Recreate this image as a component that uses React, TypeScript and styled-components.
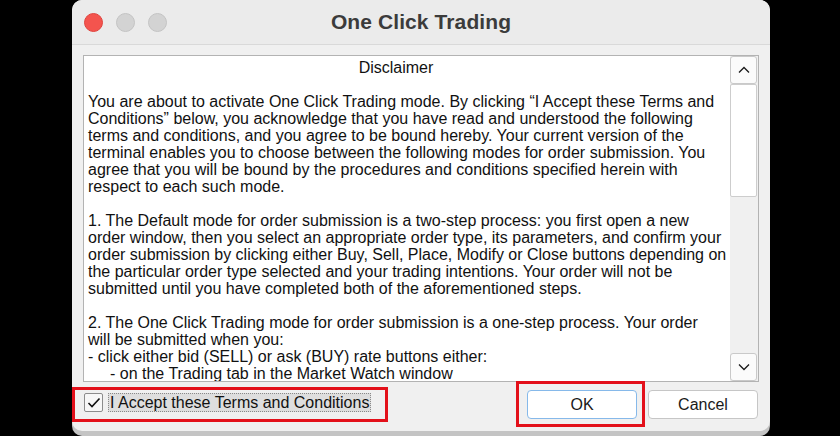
import React from "react";
import styled, { createGlobalStyle } from "styled-components";

const Global = createGlobalStyle`
  html, body { margin: 0; padding: 0; background: #000; }
  body { width: 840px; height: 436px; overflow: hidden; font-family: "Liberation Sans", Arial, sans-serif; }
`;

const Stage = styled.div`
  width: 840px;
  height: 436px;
  display: flex;
  padding-left: 72px;
  box-sizing: border-box;
`;

const Window = styled.div`
  position: relative;
  width: 698px;
  height: 431px;
  background: #f0f0f0;
  border-radius: 10px;
  box-shadow: 0 5px 0 #c4c4c4;
  display: flex;
  flex-direction: column;
`;

const TitleBar = styled.div`
  height: 45px;
  flex: none;
  box-sizing: border-box;
  border-bottom: 1px solid #d9d9d9;
  background: #ebebeb;
  border-radius: 10px 10px 0 0;
  display: grid;
  grid-template-columns: 1fr auto 1fr;
  align-items: center;
  padding: 0 12px;
`;

const Lights = styled.div`
  display: flex;
  gap: 13px;
  align-items: center;
`;

const Light = styled.span<{ $color: string; $edge: string }>`
  width: 19px;
  height: 19px;
  border-radius: 50%;
  box-sizing: border-box;
  background: ${(p) => p.$color};
  border: 1px solid ${(p) => p.$edge};
`;

const Title = styled.div`
  font-family: "Liberation Sans", Arial, sans-serif;
  font-weight: bold;
  font-size: 21px;
  color: #3b3b3b;
  letter-spacing: 0.1px;
`;

const Body = styled.div`
  padding: 10px 11px 0 11px;
  display: flex;
  flex-direction: column;
`;

const TextBox = styled.div`
  height: 327px;
  box-sizing: border-box;
  border: 1px solid #b3b3b3;
  display: flex;
  background: #fff;
`;

const TextArea = styled.div`
  flex: 1;
  overflow: hidden;
  padding: 3px 0 0 4px;
  font-family: "Liberation Sans", Arial, sans-serif;
  font-size: 16px;
  line-height: 17px;
  color: #111;
`;

const Line = styled.div<{ $center?: boolean; $indent?: number }>`
  white-space: pre;
  height: 17px;
  text-align: ${(p) => (p.$center ? "center" : "left")};
  padding-right: ${(p) => (p.$center ? "26px" : "0")};
  padding-left: ${(p) => p.$indent ?? 0}px;
`;

const ScrollBar = styled.div`
  width: 28px;
  flex: none;
  background: #f0f0f0;
  display: flex;
  flex-direction: column;
  padding-right: 1px;
  box-sizing: border-box;
`;

const ScrollButton = styled.div`
  height: 28px;
  flex: none;
  box-sizing: border-box;
  border: 1px solid #c9c9c9;
  border-radius: 3px;
  background: #fbfbfb;
  display: flex;
  align-items: center;
  justify-content: center;
`;

const Thumb = styled.div`
  height: 113px;
  flex: none;
  box-sizing: border-box;
  border: 1px solid #cdcdcd;
  border-radius: 2px;
  background: #fff;
`;

const Track = styled.div`
  flex: 1;
`;

const BottomRow = styled.div`
  height: 49px;
  display: flex;
  align-items: flex-start;
`;

const CheckGroup = styled.label`
  margin-top: 11px;
  margin-left: 1px;
  display: flex;
  align-items: center;
  gap: 5px;
`;

const CheckBox = styled.span`
  width: 19px;
  height: 19px;
  box-sizing: border-box;
  border: 1px solid #8c8c8c;
  border-radius: 2px;
  background: #f7f7f7;
  display: flex;
  align-items: center;
  justify-content: center;
`;

const FocusLabel = styled.span`
  height: 19px;
  box-sizing: border-box;
  border: 1px dotted #8a8a8a;
  background: #dedede;
  padding: 0 1px;
  font-family: "Liberation Sans", Arial, sans-serif;
  font-size: 16px;
  line-height: 17px;
  color: #111;
  white-space: nowrap;
`;

const Spacer = styled.div`
  flex: 1;
`;

const Buttons = styled.div`
  margin-top: 8px;
  margin-right: 1px;
  display: flex;
  gap: 11px;
`;

const Button = styled.button<{ $primary?: boolean }>`
  width: 110px;
  height: 29px;
  box-sizing: border-box;
  border: 1px solid ${(p) => (p.$primary ? "#86b9ea" : "#c6c6c6")};
  border-radius: 4px;
  background: #fff;
  font-family: "Liberation Sans", Arial, sans-serif;
  font-size: 16px;
  color: #1a1a1a;
  padding: 0;
`;

const Highlight = styled.div<{ $l: number; $t: number; $w: number; $h: number }>`
  position: absolute;
  left: ${(p) => p.$l}px;
  top: ${(p) => p.$t}px;
  width: ${(p) => p.$w}px;
  height: ${(p) => p.$h}px;
  box-sizing: border-box;
  border: 3px solid #e3101a;
  pointer-events: none;
`;

const lines: { t: string; indent?: number }[] = [
  { t: "You are about to activate One Click Trading mode. By clicking \u201CI Accept these Terms and" },
  { t: "Conditions\u201D below, you acknowledge that you have read and understood the following" },
  { t: "terms and conditions, and you agree to be bound hereby. Your current version of the" },
  { t: "terminal enables you to choose between the following modes for order submission. You" },
  { t: "agree that you will be bound by the procedures and conditions specified herein with" },
  { t: "respect to each such mode." },
  { t: "" },
  { t: "1. The Default mode for order submission is a two-step process: you first open a new" },
  { t: "order window, then you select an appropriate order type, its parameters, and confirm your" },
  { t: "order submission by clicking either Buy, Sell, Place, Modify or Close buttons depending on" },
  { t: "the particular order type selected and your trading intentions. Your order will not be" },
  { t: "submitted until you have completed both of the aforementioned steps." },
  { t: "" },
  { t: "2. The One Click Trading mode for order submission is a one-step process. Your order" },
  { t: "will be submitted when you:" },
  { t: "- click either bid (SELL) or ask (BUY) rate buttons either:" },
  { t: "- on the Trading tab in the Market Watch window", indent: 22 },
];

const Chevron = ({ up }: { up?: boolean }) => (
  <svg width="12" height="8" viewBox="0 0 12 8">
    <polyline
      points={up ? "1,6.5 6,1.5 11,6.5" : "1,1.5 6,6.5 11,1.5"}
      fill="none"
      stroke="#1a1a1a"
      strokeWidth="1.3"
    />
  </svg>
);

export default function App() {
  return (
    <>
      <Global />
      <Stage>
        <Window>
          <TitleBar>
            <Lights>
              <Light $color="#f4544e" $edge="#e0443e" />
              <Light $color="#d3d3d3" $edge="#c4c4c4" />
              <Light $color="#d3d3d3" $edge="#c4c4c4" />
            </Lights>
            <Title>One Click Trading</Title>
            <div />
          </TitleBar>
          <Body>
            <TextBox>
              <TextArea>
                <Line $center>Disclaimer</Line>
                <Line>{""}</Line>
                {lines.map((l, i) => (
                  <Line key={i} $indent={l.indent}>
                    {l.t}
                  </Line>
                ))}
              </TextArea>
              <ScrollBar>
                <ScrollButton>
                  <Chevron up />
                </ScrollButton>
                <Thumb />
                <Track />
                <ScrollButton>
                  <Chevron />
                </ScrollButton>
              </ScrollBar>
            </TextBox>
            <BottomRow>
              <CheckGroup>
                <CheckBox>
                  <svg width="14" height="12" viewBox="0 0 14 12">
                    <polyline points="1.5,6 5,9.5 12.5,1.5" fill="none" stroke="#111" strokeWidth="1.6" />
                  </svg>
                </CheckBox>
                <FocusLabel>I Accept these Terms and Conditions</FocusLabel>
              </CheckGroup>
              <Spacer />
              <Buttons>
                <Button $primary>OK</Button>
                <Button>Cancel</Button>
              </Buttons>
            </BottomRow>
          </Body>
          <Highlight $l={0} $t={387} $w={316} $h={35} />
          <Highlight $l={444} $t={381} $w={129} $h={46} />
        </Window>
      </Stage>
    </>
  );
}
